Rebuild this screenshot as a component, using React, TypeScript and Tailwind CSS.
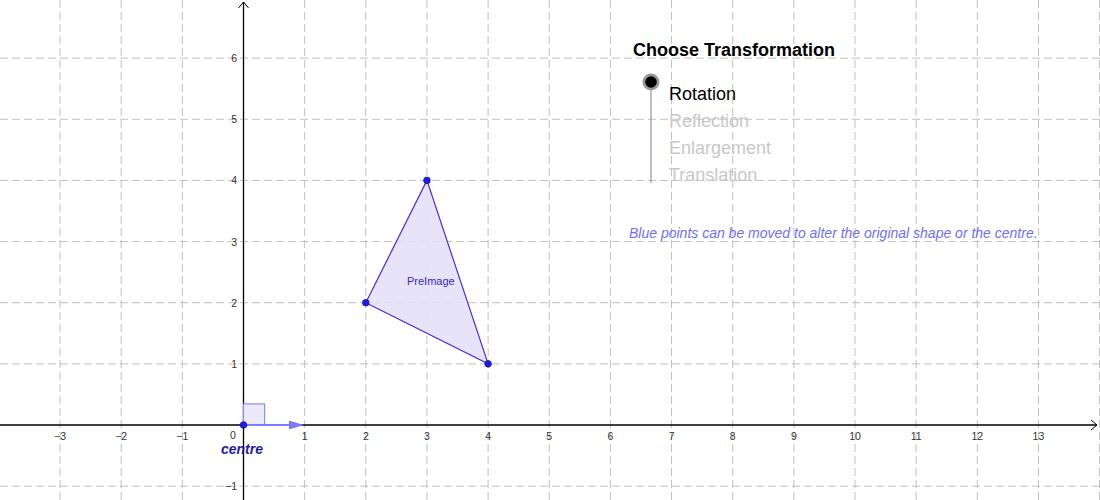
import React from "react";

const U = 61.15;
const OX = 243.5;
const OY = 425;
const px = (x: number) => OX + x * U;
const py = (y: number) => OY - y * U;

export default function App() {
  const xs: number[] = [];
  for (let k = -3; k <= 14; k++) if (k !== 0) xs.push(k);
  const ys: number[] = [];
  for (let k = -1; k <= 6; k++) if (k !== 0) ys.push(k);
  const tri = [
    [2, 2],
    [3, 4],
    [4, 1],
  ];
  const triPts = tri.map(([a, b]) => `${px(a)},${py(b)}`).join(" ");
  const sq = 0.345 * U;
  return (
    <div className="relative w-[1100px] h-[500px] bg-white overflow-hidden" style={{ fontFamily: '"Liberation Sans", Arial, sans-serif' }}>
      <svg width="1100" height="500" className="absolute left-0 top-0">
        {xs.map((k) => (
          <line key={"vx" + k} x1={px(k)} y1={0} x2={px(k)} y2={500} stroke="#c0c0c0" strokeWidth={1} strokeDasharray="8 4" />
        ))}
        {ys.map((k) => (
          <line key={"hy" + k} x1={0} y1={py(k)} x2={1100} y2={py(k)} stroke="#c0c0c0" strokeWidth={1} strokeDasharray="8 4" />
        ))}
        {/* axes */}
        <line x1={0} y1={OY} x2={1097} y2={OY} stroke="#000" strokeWidth={1.3} />
        <polyline points={`1091,${OY - 5} 1097,${OY} 1091,${OY + 5}`} fill="none" stroke="#000" strokeWidth={1} />
        <line x1={OX} y1={2} x2={OX} y2={500} stroke="#000" strokeWidth={1.3} />
        <polyline points={`${OX - 5},8 ${OX},2 ${OX + 5},8`} fill="none" stroke="#000" strokeWidth={1} />
        {/* tick labels */}
        {xs.filter((k) => k <= 13).map((k) => (
          <text key={"tx" + k} x={px(k)} y={440} fontSize={10.5} textAnchor="middle" fill="#333" fontFamily='"Liberation Sans", Arial, sans-serif'>
            {k < 0 ? "\u2212" + Math.abs(k) : k}
          </text>
        ))}
        <text x={233} y={439} fontSize={10.5} textAnchor="middle" fill="#333" fontFamily='"Liberation Sans", Arial, sans-serif'>0</text>
        {ys.map((k) => (
          <text key={"ty" + k} x={237} y={py(k) + 4} fontSize={10.5} textAnchor="end" fill="#333" fontFamily='"Liberation Sans", Arial, sans-serif'>
            {k < 0 ? "\u2212" + Math.abs(k) : k}
          </text>
        ))}
        {/* triangle */}
        <polygon points={triPts} fill="#e4e0f7" fillOpacity={0.9} stroke="#4b2fd8" strokeWidth={1.2} />
        {tri.map(([a, b]) => (
          <circle key={a + "-" + b} cx={px(a)} cy={py(b)} r={3.3} fill="#1a1aff" stroke="#1a1a66" strokeWidth={0.8} />
        ))}
        <text x={407} y={285} fontSize={11} fill="#3a28c8" fontFamily='"Liberation Sans", Arial, sans-serif'>PreImage</text>
        {/* centre square and vector */}
        <rect x={OX} y={OY - sq} width={sq} height={sq} fill="#ece9fb" stroke="#8c8cff" strokeWidth={1.2} />
        <line x1={OX} y1={OY} x2={292} y2={OY} stroke="#7b7bff" strokeWidth={2} />
        <polygon points={`289,${OY - 4.5} 304,${OY} 289,${OY + 4.5}`} fill="#7b7bff" />
        <circle cx={OX} cy={OY} r={3.3} fill="#1a1aff" stroke="#1a1a66" strokeWidth={0.8} />
        {/* slider */}
        <line x1={651} y1={82} x2={651} y2={183} stroke="#808080" strokeWidth={1} />
        <circle cx={651} cy={82} r={8.5} fill="#999" />
        <circle cx={651} cy={82} r={5.8} fill="#000" />
      </svg>

      <div className="absolute left-[221px] top-[442px] text-[14px] font-bold italic text-[#1c1ca0] leading-none">centre</div>

      <div className="absolute left-[633px] top-[39px] text-[18px] font-bold text-black leading-[22px]">Choose Transformation</div>

      <div className="absolute left-[669px] top-[81px] flex flex-col text-[18px] leading-[27px]">
        <span className="text-black">Rotation</span>
        <span className="text-[#c8c8c8]">Reflection</span>
        <span className="text-[#c8c8c8]">Enlargement</span>
        <span className="text-[#c8c8c8]">Translation</span>
      </div>

      <div className="absolute left-[629px] top-[224px] text-[14px] italic text-[#6f6fff] leading-[18px] whitespace-nowrap">
        Blue points can be moved to alter the original shape or the centre.
      </div>
    </div>
  );
}
